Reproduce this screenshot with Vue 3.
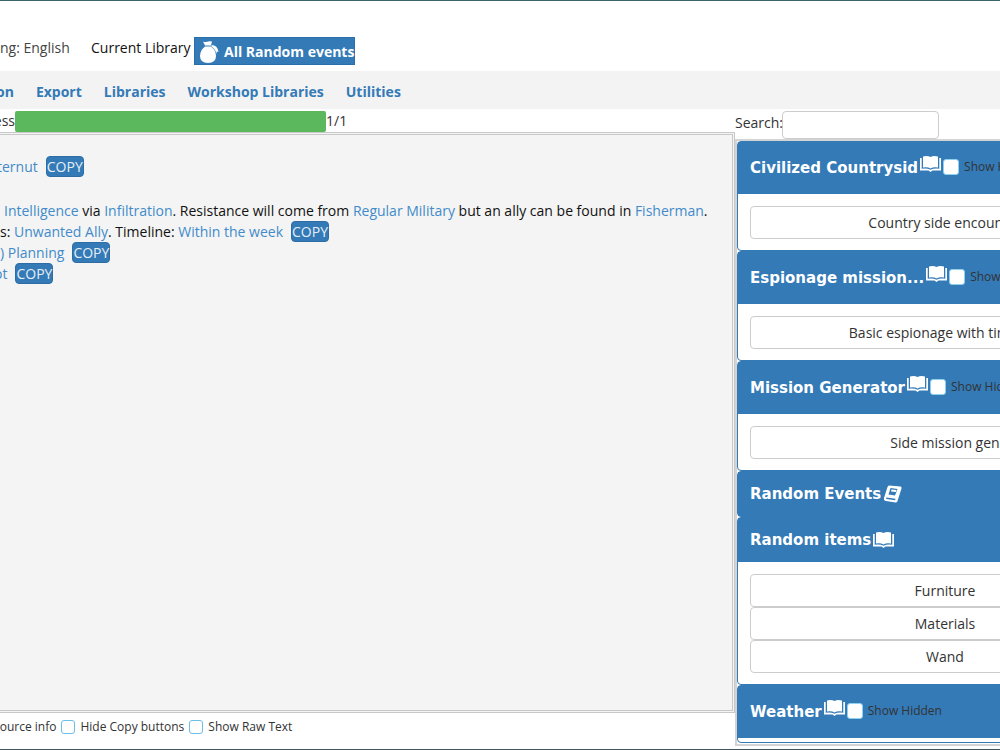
<template>
    <div class="app">
        <header class="top">
            <span class="lang">ng: English</span>
            <span class="current">Current Library</span>
            <button class="library" type="button">
                <svg class="bag" viewBox="0 0 20 22">
                    <path d="M4 0.5 Q6 1.5 8 0.8 Q10 0 13 0.5 L12 4.5 H6 Z" />
                    <path d="M6 5.5 H12 Q17 9.5 17 15 Q17 22 9 22 Q1 22 1 15 Q1 9.5 6 5.5 Z" />
                    <path d="M12.5 4 Q18.5 4 19.5 11 L17.8 10.5 L17.3 13 Q16.5 8 12.5 5.5 Z" />
                </svg>
                <span>All Random events</span>
            </button>
        </header>

        <nav class="menu">
            <a v-for="item in menu" :key="item" href="#">{{ item }}</a>
        </nav>

        <div class="columns">
            <main class="left">
                <div class="progress-row">
                    <span class="progress-label">ess</span>
                    <div class="progress"></div>
                    <span>1/1</span>
                </div>

                <section class="output">
                    <p class="first"><a href="#">ternut</a><button class="copy" type="button">COPY</button></p>
                    <p class="indent"><a href="#">Intelligence</a> via <a href="#">Infiltration</a>. Resistance will come from <a href="#">Regular Military</a> but an ally can be found in <a href="#">Fisherman</a>.</p>
                    <p>s: <a href="#">Unwanted Ally</a>. Timeline: <a href="#">Within the week</a><button class="copy" type="button">COPY</button></p>
                    <p><a href="#">) Planning</a><button class="copy" type="button">COPY</button></p>
                    <p class="cut"><a href="#">ot</a><button class="copy" type="button">COPY</button></p>
                </section>

                <div class="options">
                    <span>source info</span>
                    <label><input type="checkbox" />Hide Copy buttons</label>
                    <label><input type="checkbox" />Show Raw Text</label>
                </div>
            </main>

            <aside class="right">
                <div class="search">
                    <label for="search">Search:</label>
                    <input id="search" type="text" />
                </div>

                <div class="groups">
                    <section v-for="group in groups" :key="group.name" class="group">
                        <div class="group-head" :class="{ tall: group.hidden }">
                            <h2>{{ group.name }}</h2>
                            <svg v-if="group.closed" class="closed" viewBox="0 0 20 18">
                                <path fill-rule="evenodd" d="M6 0.5 L17.5 1.5 Q19 2 18.5 3.5 L14.5 16 Q14 17.5 12.5 17.5 L3 16 Q0.5 15.5 1 13 L4.5 2 Q5 0.5 6 0.5 Z M7.5 3 L5.5 9.5 L12 10.5 L14.5 4 Z M3.5 12.5 Q2.5 13.5 3.5 14 L12 15.2 L12.6 13.8 Z" />
                                <path d="M8.5 4.5 L13.5 5 L13 7 L8 6.5 Z" />
                            </svg>
                            <svg v-else class="book" viewBox="0 0 21 16">
                                <path d="M3 0.5 Q7.5 -0.5 10.5 1 Q13.5 -0.5 18 0.5 V11.5 Q13.5 10.5 10.5 12.5 Q7.5 10.5 3 11.5 Z" />
                                <path d="M0 2 H1.7 V12.8 Q7 12 10.5 13.8 Q14 12 19.3 12.8 V2 H21 V14.5 H12.5 L10.5 16 L8.5 14.5 H0 Z" />
                            </svg>
                            <label v-if="group.hidden"><input type="checkbox" />Show Hidden</label>
                        </div>
                        <div v-if="group.items" class="group-body" :class="{ empty: !group.items.length }">
                            <button v-for="item in group.items" :key="item" type="button">{{ item }}</button>
                        </div>
                    </section>
                </div>
            </aside>
        </div>
    </div>
</template>

<script setup>
    const menu = ['on', 'Export', 'Libraries', 'Workshop Libraries', 'Utilities'];

    const groups = [
        { name: 'Civilized Countrysid', hidden: true, items: ['Country side encounter'] },
        { name: 'Espionage mission...', hidden: true, items: ['Basic espionage with timeline'] },
        { name: 'Mission Generator', hidden: true, items: ['Side mission gen'] },
        { name: 'Random Events', closed: true },
        { name: 'Random items', items: ['Furniture', 'Materials', 'Wand'] },
        { name: 'Weather', hidden: true, items: [] }
    ];
</script>

<style>
    body{
        overflow: hidden;
    }
</style>

<style scoped>
    .app{
        box-sizing: border-box;
        min-height: 100vh;
        display: flex;
        flex-direction: column;
        border-top: 1px solid #3b6469;
        border-bottom: 1px solid #3f555d;
        background: #fff;
        color: #333;
        font: 14px/22px "Open Sans", sans-serif;
        white-space: nowrap;
        overflow: hidden;
    }

    a{
        color: #428bca;
        text-decoration: none;
    }

    button, input{
        box-sizing: border-box;
        font: inherit;
        margin: 0;
    }

    .top{
        height: 70px;
        box-sizing: border-box;
        padding-top: 36px;
        display: flex;
        align-items: flex-start;
    }

    .lang{
        width: 91px;
        color: #444;
    }

    .current{
        width: 103px;
        color: #111;
    }

    .library{
        height: 28px;
        width: 161px;
        padding: 1px 0 0 4px;
        display: flex;
        align-items: center;
        gap: 5px;
        border: 1px solid #286fad;
        background: #337ab7;
        color: #fff;
        font-weight: bold;
    }

    .bag{
        width: 20px;
        height: 22px;
        flex: none;
        fill: #fff;
    }

    .menu{
        height: 38px;
        box-sizing: border-box;
        padding-top: 3px;
        display: flex;
        align-items: center;
        gap: 22px;
        background: #f3f3f3;
        font-weight: bold;
    }

    .menu a{
        color: #337ab7;
    }

    /* the first entry is scrolled partly out of view */
    .menu a:first-child{
        margin-left: -4px;
    }

    .columns{
        flex: 1;
        display: grid;
        grid-template-columns: minmax(0, 1fr) 265px;
    }

    .left{
        display: flex;
        flex-direction: column;
        min-width: 0;
    }

    .progress-row{
        height: 23px;
        padding-top: 1px;
        box-sizing: border-box;
        display: flex;
        align-items: center;
    }

    .progress-label{
        width: 15px;
        display: flex;
        justify-content: flex-end;
    }

    .progress{
        width: 311px;
        height: 21px;
        border-radius: 2px;
        background: #5cb85c;
    }

    .output{
        flex: 1;
        padding-top: 21px;
        border: 3px double #c8c8c8;
        border-left: 0;
        background: #f4f4f4;
        color: #111;
    }

    .output p{
        margin: 0;
        height: 21px;
    }

    .output .first{
        margin: 0 0 23px -3px;
    }

    .output .indent{
        padding-left: 4px;
    }

    .output .cut{
        margin-left: -6px;
    }

    .copy{
        height: 21px;
        margin-left: 8px;
        padding: 0;
        border: 1px solid #2e6da4;
        border-radius: 4px;
        background: #337ab7;
        color: #e6eef5;
        line-height: 19px;
        vertical-align: top;
    }

    .options{
        height: 36px;
        margin-left: -6px;
        padding-bottom: 8px;
        box-sizing: border-box;
        display: flex;
        align-items: center;
        gap: 5px;
        font-size: 12px;
    }

    .options label, .group-head label{
        display: flex;
        align-items: center;
        gap: 5px;
    }

    input[type="checkbox"]{
        appearance: none;
        width: 14px;
        height: 14px;
        border: 1px solid #6cc0e5;
        border-radius: 3px;
        background: #fff;
    }

    .search{
        height: 30px;
        padding-top: 1px;
        box-sizing: border-box;
        display: flex;
        align-items: center;
    }

    .search label{
        width: 47px;
        height: 26px;
    }

    .search input{
        width: 157px;
        height: 28px;
        border: 1px solid #ccc;
        border-radius: 4px;
        background: #fff;
    }

    /* wider than its column, the window cuts it off */
    .groups{
        width: 420px;
        box-sizing: border-box;
        border: 2px solid #d4d4d4;
        padding-bottom: 1px;
    }

    .group{
        box-sizing: border-box;
        border: 1px solid #337ab7;
        border-radius: 4px;
        background: #fff;
    }

    .group-head{
        height: 44px;
        padding-left: 12px;
        display: flex;
        align-items: center;
        gap: 2px;
        background: #337ab7;
        color: #fff;
    }

    .group-head.tall{
        height: 52px;
    }

    .group-head h2{
        margin: 0;
        font: bold 15px/20px "DejaVu Sans", sans-serif;
    }

    .group-head svg{
        flex: none;
        fill: #fff;
    }

    .book{
        width: 21px;
        height: 16px;
    }

    .closed{
        width: 20px;
        height: 18px;
    }

    .tall .book{
        margin-bottom: 8px;
    }

    .group-head label{
        margin-bottom: 2px;
        color: #333;
        font-size: 12px;
    }

    .group-head input{
        width: 16px;
        height: 16px;
        border: 1px solid #8fd0ef;
    }

    .group-body{
        padding: 12px 12px 11px;
        display: flex;
        flex-direction: column;
    }

    .group-body.empty{
        padding: 2px;
    }

    .group-body button{
        height: 33px;
        border: 1px solid #ccc;
        border-radius: 4px;
        background: #fff;
        color: #333;
    }
</style>
